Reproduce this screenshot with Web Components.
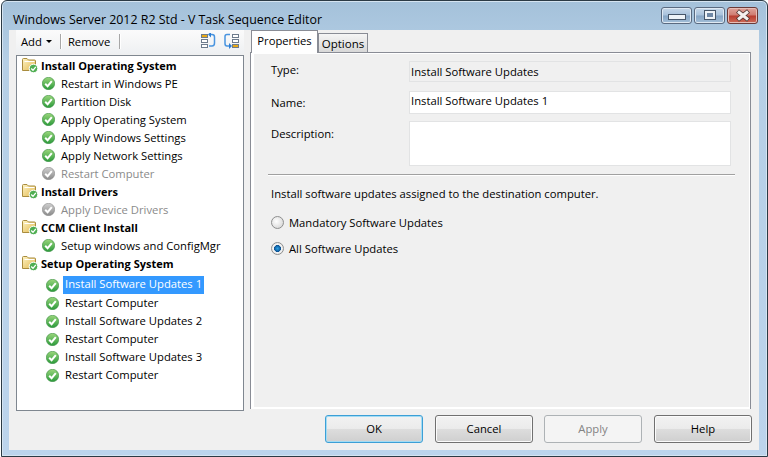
<!DOCTYPE html>
<html><head><meta charset="utf-8"><style>
html,body{margin:0;padding:0;width:768px;height:457px;overflow:hidden;background:#fff;font:11.25px "Open Sans",sans-serif;color:#000}
</style></head><body>
<ts-window>
  <span slot="title">Windows Server 2012 R2 Std - V Task Sequence Editor</span>
  <ts-left slot="left">
    <ts-group label="Install Operating System">
      <ts-step>Restart in Windows PE</ts-step><ts-step>Partition Disk</ts-step><ts-step>Apply Operating System</ts-step><ts-step>Apply Windows Settings</ts-step><ts-step>Apply Network Settings</ts-step><ts-step disabled>Restart Computer</ts-step>
    </ts-group>
    <ts-group label="Install Drivers"><ts-step disabled>Apply Device Drivers</ts-step></ts-group>
    <ts-group label="CCM Client Install"><ts-step>Setup windows and ConfigMgr</ts-step></ts-group>
    <ts-group label="Setup Operating System" deep>
      <ts-step selected>Install Software Updates 1</ts-step><ts-step>Restart Computer</ts-step><ts-step>Install Software Updates 2</ts-step><ts-step>Restart Computer</ts-step><ts-step>Install Software Updates 3</ts-step><ts-step>Restart Computer</ts-step>
    </ts-group>
  </ts-left>
  <ts-props slot="right"></ts-props>
  <ts-btn slot="buttons" default>OK</ts-btn><ts-btn slot="buttons">Cancel</ts-btn><ts-btn slot="buttons" disabled style="margin-left:-1px">Apply</ts-btn><ts-btn slot="buttons">Help</ts-btn>
</ts-window>
<script>
const CHECK=(id,gray)=>`<svg width="13" height="13" viewBox="0 0 13 13" style="display:block;flex:none"><defs><linearGradient id="${id}" x1="0" y1="0" x2="0" y2="1"><stop offset="0" stop-color="${gray?'#cfcfcf':'#9ad67c'}"/><stop offset="1" stop-color="${gray?'#8a8a8a':'#2a9a3a'}"/></linearGradient></defs><circle cx="6.5" cy="6.5" r="6.2" fill="url(#${id})" stroke="${gray?'#8c8c8c':'#3d8f45'}" stroke-width=".6"/><path d="M3.2 6.8 5.6 9.2 9.8 4.2" fill="none" stroke="#fff" stroke-width="2"/></svg>`;
let uid=0;
function def(name,html){customElements.define(name,class extends HTMLElement{constructor(){super();this.attachShadow({mode:'open'});}connectedCallback(){if(!this.shadowRoot.innerHTML)this.shadowRoot.innerHTML=typeof html==='function'?html(this):html;}})}

def('ts-caption',`<style>
:host{display:block;width:31px;height:17px;box-sizing:border-box;border:1px solid #5a6a80;border-radius:3px;background:linear-gradient(#c5d7e9 0,#a9c2dc 48%,#86a5c5 52%,#a3bfd8 100%);box-shadow:inset 0 0 0 1px #dfe9f3}
:host([close]){background:linear-gradient(#dfa49b 0,#cf7b70 48%,#b83c2f 52%,#cc6a58 100%);border-color:#6b3a38;box-shadow:inset 0 0 0 1px #e6bdb6}
div{height:100%;display:flex;align-items:center;justify-content:center}</style><div><slot></slot></div>`);

def('ts-window',`<style>
:host{display:flex;flex-direction:column;box-sizing:border-box;margin-left:1px;width:767px;height:457px;border:1px solid #2b3a45;border-radius:6px 6px 0 0;background:linear-gradient(#a4c1da 0,#b5cfe6 60px,#bcd4ec 100%);box-shadow:inset 0 0 0 1px #d5e4f1,inset 0 -1px 0 #4fc3e8;padding:0 8px 6px 7px}
.title{height:29px;flex:none;display:flex;align-items:center;justify-content:space-between;padding:7px 1px 0 4px;font-size:12.4px;box-sizing:border-box}
.caps{display:flex;gap:2px;margin-top:-8px}
.body{flex:1;background:#f0f0f0;display:flex;flex-direction:column;min-height:0}
.main{display:flex;gap:6px;height:379px;flex:none;padding:0 0 0 7px;box-sizing:border-box}
.btns{display:flex;justify-content:flex-end;gap:12px;padding:6px 7px 0 0}
</style>
<div class="title"><slot name="title"></slot><div class="caps">
<ts-caption><svg width="18" height="8" viewBox="0 0 18 8" style="display:block;margin-top:3px"><rect x=".5" y="1.5" width="17" height="5" fill="#eef3f8" stroke="#46566a"/></svg></ts-caption>
<ts-caption><svg width="12" height="10" viewBox="0 0 12 10" style="display:block"><rect x=".5" y=".5" width="11" height="9" fill="#eef3f8" stroke="#46566a"/><rect x="3" y="3" width="6" height="4" fill="#6f88a6"/></svg></ts-caption>
<ts-caption close><svg width="18" height="13" viewBox="0 0 18 13" style="display:block"><path d="M3.5 2 14.500 11M14.500 2 3.500 11" fill="none" stroke="#49302e" stroke-width="4.500"/><path d="M4 2.500 14 10.500M14 2.500 4 10.500" stroke="#f4efee" stroke-width="3"/></svg></ts-caption>
</div></div>
<div class="body"><div class="main"><slot name="left"></slot><slot name="right"></slot></div><div class="btns"><slot name="buttons"></slot></div></div>`);

const stackIcon=(flip)=>`<svg width="15" height="16" viewBox="0 0 15 16" style="display:block">
${(flip?[[8,'#fff'],[8,'#fff'],[8,'#e8a917']]:[[0,'#e8a917'],[0,'#fff'],[0,'#fff']]).map((r,i)=>`<rect x="${r[0]+.5}" y="${1.5+i*5}" width="6" height="3" fill="${r[1]}" stroke="#6d7b8c"/>`).join('')}
<path d="${flip?'M6 1.500H3Q1 1.500 1 3.500V10.500Q1 13 3 13H6':'M9 1.500H11Q13.500 1.500 13.500 4V10Q13.500 13 11 13H8'}" fill="none" stroke="#4a95e0" stroke-width="1.500"/>
<path d="${flip?'M5 10 8 13 5 16z':'M10 -1.500 10 4.500 7 1.500z'}" fill="#2f7fd4"/></svg>`;

def('ts-left',()=>`<style>
:host{display:flex;flex-direction:column;width:228px;flex:none;height:100%}
.bar{height:24px;flex:none;display:flex;align-items:center;padding:0 0 2px 5px;background:linear-gradient(#fbfbfb,#eef0f2);box-sizing:border-box}
.sep{width:1px;height:15px;background:#a7a7a7;box-shadow:1px 0 #fff}
.arrow{width:0;height:0;border:3px solid transparent;border-top:3px solid #000;border-bottom:0;margin:1px 8px 0 4px}
.sp{flex:1}
.tree{margin-top:1px;flex:none;height:356px;box-sizing:border-box;border:1px solid #7f8790;background:#fff;padding-top:0;overflow:hidden}
</style>
<div class="bar"><span>Add</span><span class="arrow"></span><span class="sep"></span><span style="margin:0 9px 0 7px">Remove</span><span class="sep"></span><span class="sp"></span><span style="margin-right:8px">${stackIcon(false)}</span><span style="margin-right:5px">${stackIcon(true)}</span></div>
<div class="tree"><slot></slot></div>`);

def('ts-group',(h)=>{const id='g'+(++uid);return `<style>
:host{display:block}
.h{height:18px;display:flex;align-items:center;padding-left:5px;font-weight:700;font-size:11px;white-space:nowrap}
svg{display:block;margin-right:3px;flex:none}
.kids{display:block;margin-top:${h.hasAttribute('deep')?4:0}px}
</style>
<div class="h"><svg width="16" height="16" viewBox="0 0 16 16"><defs><linearGradient id="${id}" x1="0" y1="0" x2="1" y2="1"><stop offset="0" stop-color="#fdf3c4"/><stop offset="1" stop-color="#e2b84e"/></linearGradient></defs>
<path d="M.5 13.500V2.500Q.5 1.500 1.500 1.500H5L6.500 3H12.500Q13.500 3 13.500 4V13.500z" fill="url(#${id})" stroke="#a98c3e"/><path d="M2.500 4.500H12.500" stroke="#fff"/>
<circle cx="11.500" cy="11.500" r="4.300" fill="#4fae52" stroke="#fff" stroke-width="1"/><path d="M9.200 11.500 11 13.300 13.800 9.800" fill="none" stroke="#fff" stroke-width="1.300"/></svg><span>${h.getAttribute('label')}</span></div>
<div class="kids"><slot></slot></div>`});

def('ts-step',(h)=>{const dis=h.hasAttribute('disabled'),sel=h.hasAttribute('selected'),deep=h.parentElement&&h.parentElement.hasAttribute('deep');const id='c'+(++uid);return `<style>
:host{display:block}
.r{height:18px;display:flex;align-items:center;padding-left:${deep?29:25}px;white-space:nowrap;color:${dis?'#8a8a8a':'#000'}}
.t{margin-left:6px;${deep&&!sel?'margin-bottom:2px;':''}${sel?'margin-left:4px;background:#3399ff;color:#fff;height:18px;line-height:16px;padding:0 2px;':''}}
</style><div class="r">${CHECK(id,dis)}<span class="t"><slot></slot></span></div>`});

def('ts-radio',`<style>
:host{display:flex;align-items:center;height:18px}
i{display:block;box-sizing:border-box;width:13px;height:13px;border-radius:50%;border:1px solid #8e8f8f;background:radial-gradient(circle at 40% 40%,#fff,#cfcfcf);margin-right:5px;flex:none}
:host([checked]) i{background:radial-gradient(circle at 50% 50%,#2f9fe0 0,#1878bc 1.800px,#0d4f8f 3.300px,#f6f6f6 3.700px,#d8d8d8 100%)}
</style><i></i><slot></slot>`);

def('ts-btn',`<style>
:host{display:block;box-sizing:border-box;width:98px;height:28px;border:1px solid #707070;border-radius:3px;background:linear-gradient(#f2f2f2 0,#ebebeb 48%,#dddddd 50%,#cfcfcf 100%);box-shadow:inset 0 0 0 1px #fbfbfb;text-align:center;line-height:26px}
:host([default]){border-color:#3c9fd6;box-shadow:inset 0 0 0 1px #a3dcf4}
:host([disabled]){border-color:#adb2b5;background:#f4f4f4;color:#838383;box-shadow:none}
</style><slot></slot>`);

def('ts-field',`<style>
:host{display:flex;align-items:flex-start}
.l{width:138px;flex:none;padding-top:var(--lt,4px);line-height:16px}
.b{box-sizing:border-box;width:322px;border:1px solid #e2e3e4;background:#fff}
:host([ro]) .b{background:#f0f0f0}
</style><span class="l"><slot name="label"></slot></span><div class="b"><slot></slot></div>`);

def('ts-props',`<style>
:host{display:flex;flex-direction:column;flex:1;min-width:0;height:100%}
.tabs{display:flex;align-items:flex-end;height:22px;flex:none;padding-left:1px;position:relative;z-index:1}
.tab{box-sizing:border-box;border:1px solid #898c95;border-bottom:0;text-align:center}
.on{width:67px;height:23px;background:#fff;line-height:20px;margin-bottom:-1px}
.off{width:50px;height:19px;background:linear-gradient(#f5f5f5,#d8d8d8);line-height:20px;font-size:11.5px}
.page{flex:none;height:357px;box-sizing:border-box;border:1px solid #898c95;border-width:1px 1px 0 1px;background:#fff;padding:1px 1px 2px 3px;width:501px}
.in{height:100%;background:#f0f0f0;padding-left:17px;box-sizing:border-box;padding-top:7px}
.sep{height:1px;background:#a0a0a0;box-shadow:0 1px #fff;margin:8px 0 0 -3px;width:467px}
p{margin:10px 0 0;line-height:18px}
ts-radio{margin-bottom:8px}
</style>
<div class="tabs"><div class="tab on">Properties</div><div class="tab off">Options</div></div>
<div class="page"><div class="in">
<ts-field ro style="--lt:1px;margin-bottom:9px"><span slot="label">Type:</span><div style="height:19px;line-height:19px;padding-left:1px">Install Software Updates</div></ts-field>
<ts-field style="margin-bottom:7px"><span slot="label">Name:</span><div style="height:21px;line-height:17px;padding-left:1px">Install Software Updates 1</div></ts-field>
<ts-field style="--lt:5px"><span slot="label">Description:</span><div style="height:43px"></div></ts-field>
<div class="sep"></div>
<p>Install software updates assigned to the destination computer.</p>
<ts-radio style="margin-top:10px">Mandatory Software Updates</ts-radio>
<ts-radio checked>All Software Updates</ts-radio>
</div></div>`);
</script>
</body></html>
